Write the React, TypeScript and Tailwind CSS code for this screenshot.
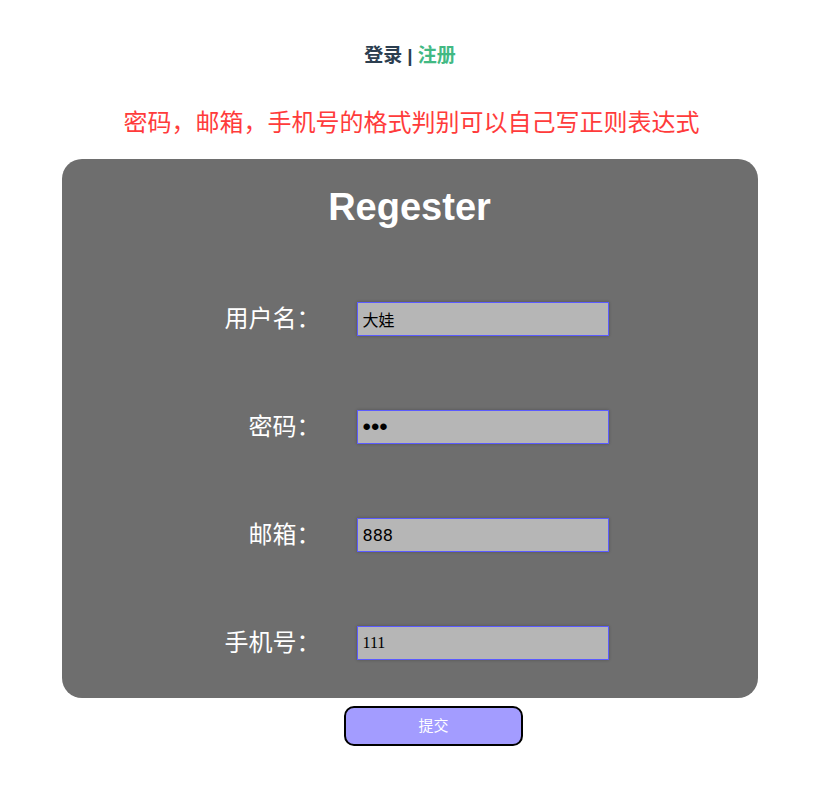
import React from "react";

const cjk = "font-['Liberation_Sans','Noto_Sans_CJK_SC',sans-serif]";

function Row({ label, children, first }: { label: string; children: React.ReactNode; first?: boolean }) {
  return (
    <div className={`flex items-center h-[34px] ${first ? "mt-[73px]" : "mt-[74px]"}`}>
      <label className="w-[259px] text-right text-[24px] leading-[34px] text-white">{label}</label>
      <div className="ml-[36px]">{children}</div>
    </div>
  );
}

const inputCls =
  "block w-[252px] h-[34px] bg-[#b6b6b6] border border-[#5b5bff] px-[5px] text-[16px] text-black outline-none shadow-[0_0_3px_rgba(0,0,0,0.25)]";

export default function App() {
  return (
    <div className={`min-h-[786px] bg-white flex flex-col items-center ${cjk}`}>
      {/* top nav */}
      <nav className="pt-[45px] mr-[3px] text-[19px] leading-[22px] font-bold text-[#2c3e50]">
        <span>登录</span>
        <span className="mx-[5px]">|</span>
        <span className="text-[#42b983]">注册</span>
      </nav>

      <p className="mt-[41px] text-[24px] leading-[30px] text-[#ff3b3b]">
        密码，邮箱，手机号的格式判别可以自己写正则表达式
      </p>

      {/* card */}
      <form className="mt-[21px] mr-[4px] w-[696px] h-[539px] rounded-[20px] bg-[#6e6e6e] pt-[26px]">
        <h1 className="text-center text-[38px] leading-[44px] font-bold text-white font-['Liberation_Sans',sans-serif]">
          Regester
        </h1>
        <Row label="用户名：" first>
          <input className={`${inputCls} ${cjk}`} value="大娃" readOnly />
        </Row>
        <Row label="密码：">
          <input type="password" className={`${inputCls} font-['Liberation_Sans',sans-serif] text-[24px]`} value="123" readOnly />
        </Row>
        <Row label="邮箱：">
          <input className={`${inputCls} font-['DejaVu_Sans',sans-serif] text-[15px]`} value="888" readOnly />
        </Row>
        <Row label="手机号：">
          <input className={`${inputCls} font-['Liberation_Serif',serif]`} value="111" readOnly />
        </Row>
      </form>

      <button
        type="button"
        className="mt-[8px] ml-[44px] w-[179px] h-[40px] rounded-[10px] border-2 border-black bg-[#a39cff] text-white text-[15px]"
      >
        提交
      </button>
    </div>
  );
}
